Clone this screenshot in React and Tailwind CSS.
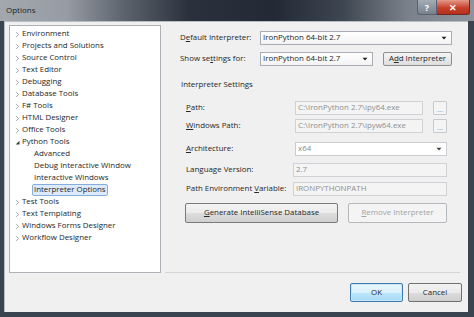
import React from 'react';

// Small glyphs used in the tree and the combo boxes
const Chevron = () => (
  <svg width="5" height="7" viewBox="0 0 5 7" className="shrink-0">
    <path d="M1.2 1.2 L3.6 3.5 L1.2 5.8" fill="none" stroke="#9a9a9a" strokeWidth="0.9" />
  </svg>
);

const Expanded = () => (
  <svg width="5" height="7" viewBox="0 0 5 7" className="shrink-0">
    <polygon points="4.5,1.8 4.5,5.6 0.7,5.6" fill="#3a3a3a" />
  </svg>
);

const DropArrow = ({ color = '#222' }) => (
  <svg width="6" height="4" viewBox="0 0 6 4" className="shrink-0">
    <polygon points="0.5,0.8 5.5,0.8 3,3.4" fill={color} />
  </svg>
);

const treeItems = [
  { label: 'Environment' },
  { label: 'Projects and Solutions' },
  { label: 'Source Control' },
  { label: 'Text Editor' },
  { label: 'Debugging' },
  { label: 'Database Tools' },
  { label: 'F# Tools' },
  { label: 'HTML Designer' },
  { label: 'Office Tools' },
  { label: 'Python Tools', open: true },
  { label: 'Advanced', child: true },
  { label: 'Debug Interactive Window', child: true },
  { label: 'Interactive Windows', child: true },
  { label: 'Interpreter Options', child: true, selected: true },
  { label: 'Test Tools' },
  { label: 'Text Templating' },
  { label: 'Windows Forms Designer' },
  { label: 'Workflow Designer' },
];

const TreeRow = ({ item }) => {
  if (item.child) {
    return (
      <div className="h-[12px] flex items-center pl-[22px]">
        <span
          className={
            item.selected
              ? 'h-[12px] flex items-center px-[1px] border border-[#84acdd] bg-[#dceafb] rounded-[2px]'
              : 'px-[2px]'
          }
        >
          {item.label}
        </span>
      </div>
    );
  }
  return (
    <div className="h-[12px] flex items-center pl-[5px] gap-[2px]">
      {item.open ? <Expanded /> : <Chevron />}
      <span>{item.label}</span>
    </div>
  );
};

const Combo = ({ text, className = '', disabled = false }) => (
  <div
    className={`h-[14px] flex items-center justify-between border pl-[2px] pr-[4px] ${
      disabled ? 'border-[#c9ccd0] bg-white text-[#8a8a8a]' : 'border-[#a9acb2] bg-[linear-gradient(#ffffff,#f3f3f3)] text-[#262626]'
    } ${className}`}
  >
    <span>{text}</span>
    <DropArrow color={disabled ? '#444' : '#222'} />
  </div>
);

const Field = ({ text, className = '' }) => (
  <div className={`h-[14px] flex items-center border border-[#cfd1d4] bg-[#f4f4f4] px-[2px] text-[#8f8f8f] ${className}`}>
    {text}
  </div>
);

const Browse = () => (
  <div className="w-[14px] h-[14px] flex items-end justify-center border border-[#c7c9cc] bg-[#f4f4f4] text-[#9a9a9a] leading-[9px] rounded-[1px]">
    ...
  </div>
);

const Label = ({ children, className = '' }) => (
  <div className={`shrink-0 text-[#262626] ${className}`}>{children}</div>
);

export default function App() {
  return (
    <div className="w-[474px] h-[317px] flex flex-col bg-[#3a4350] font-['Open_Sans','Noto_Sans',sans-serif] text-[7.9px] leading-none overflow-hidden">
      {/* Title bar */}
      <div className="h-[21px] shrink-0 flex items-start bg-[linear-gradient(to_right,#a3a8af_0%,#979ca4_14%,#5d646e_26%,#2a313c_40%,#232a35_58%,#3d4550_72%,#7b818a_86%,#8e949c_100%)]">
        <div className="pl-[6px] pt-[6px] text-[8px] text-[#1c1f24]">Options</div>
        <div className="ml-auto mr-[4px] flex">
          <div className="w-[20px] h-[15px] flex items-center justify-center border border-[#59616c] border-t-0 rounded-bl-[3px] bg-[linear-gradient(#a4abb5,#78818d)] text-white text-[9px] font-bold">
            ?
          </div>
          <div className="w-[33px] h-[15px] flex items-center justify-center border border-[#6e2a22] border-t-0 border-l-0 rounded-br-[3px] bg-[linear-gradient(#e49a8c,#c8402c_55%,#b5301d)] text-white text-[9px] font-bold">
            ✕
          </div>
        </div>
      </div>

      {/* Client area */}
      <div className="flex-1 ml-[4px] mr-[6px] mb-[5px] flex flex-col border-l border-t border-[#b9bec5] bg-[#f0f0f0]">
        <div className="flex pt-[3px] pl-[4px]">
          {/* Tree */}
          <div className="w-[152px] h-[248px] shrink-0 border border-[#aeb2b7] bg-white pt-[2px] text-[#262626]">
            {treeItems.map((item) => (
              <TreeRow key={item.label} item={item} />
            ))}
          </div>

          {/* Settings */}
          <div className="w-[295px] h-[248px] ml-[4px] border-b border-[#d5d5d5] pl-[15px]">
            <div className="mt-[6px] flex items-center">
              <Label className="w-[80px]">
                D<span className="underline">e</span>fault Interpreter:
              </Label>
              <Combo text="IronPython 64-bit 2.7" className="w-[192px]" />
            </div>
            <div className="mt-[7px] flex items-center">
              <Label className="w-[80px]">
                Show se<span className="underline">t</span>tings for:
              </Label>
              <Combo text="IronPython 64-bit 2.7" className="w-[113px]" />
              <div className="ml-[10px] w-[69px] h-[14px] flex items-center justify-center border border-[#8e8f8f] rounded-[2px] bg-[linear-gradient(#f4f4f4,#dedede)] text-[#262626]">
                A<span className="underline">d</span>d Interpreter
              </div>
            </div>

            <div className="mt-[13px] pl-[1px] h-[11px] flex items-center text-[#262626]">Interpreter Settings</div>

            <div className="pl-[6px]">
              <div className="mt-[11px] flex items-center">
                <Label className="w-[109px]">
                  <span className="underline">P</span>ath:
                </Label>
                <Field text="C:\IronPython 2.7\ipy64.exe" className="w-[128px]" />
                <div className="ml-[10px]">
                  <Browse />
                </div>
              </div>
              <div className="mt-[4px] flex items-center">
                <Label className="w-[109px]">
                  <span className="underline">W</span>indows Path:
                </Label>
                <Field text="C:\IronPython 2.7\ipyw64.exe" className="w-[128px]" />
                <div className="ml-[10px]">
                  <Browse />
                </div>
              </div>
              <div className="mt-[9px] flex items-center">
                <Label className="w-[109px]">
                  <span className="underline">A</span>rchitecture:
                </Label>
                <Combo text="x64" disabled className="w-[152px]" />
              </div>
              <div className="mt-[7px] flex items-center">
                <Label className="w-[107px]">
                  Lan<span className="underline">g</span>uage Version:
                </Label>
                <Field text="2.7" className="w-[154px]" />
              </div>
              <div className="mt-[5px] flex items-center">
                <Label className="w-[107px]">
                  Path Environment <span className="underline">V</span>ariable:
                </Label>
                <Field text="IRONPYTHONPATH" className="w-[154px]" />
              </div>
              <div className="mt-[7px] flex items-center">
                <div className="-ml-[1px] w-[153px] h-[20px] flex items-center justify-center border border-[#777a7d] rounded-[2px] bg-[linear-gradient(#f3f3f3_0%,#ebebeb_50%,#dddddd_51%,#cfcfcf_100%)] text-[#262626]">
                  <span className="underline">G</span>enerate IntelliSense Database
                </div>
                <div className="ml-[10px] w-[99px] h-[20px] flex items-center justify-center border border-[#b4b8bc] rounded-[2px] bg-[#f4f4f4] text-[#a3a3a3]">
                  <span className="underline">R</span>emove Interpreter
                </div>
              </div>
            </div>
          </div>
        </div>

        {/* Dialog buttons */}
        <div className="flex justify-end pr-[6px] pt-[10px]">
          <div className="w-[53px] h-[19px] flex items-center justify-center border border-[#3d7bad] rounded-[2px] bg-[linear-gradient(#eaf6fd_0%,#d9f0fc_50%,#bee6fd_51%,#a7d9f5_100%)] text-[#262626] shadow-[inset_0_0_0_1px_#c8e6f8]">
            OK
          </div>
          <div className="ml-[5px] w-[54px] h-[19px] flex items-center justify-center border border-[#707070] rounded-[2px] bg-[linear-gradient(#f2f2f2_0%,#ebebeb_50%,#dddddd_51%,#cfcfcf_100%)] text-[#262626]">
            Cancel
          </div>
        </div>
      </div>
    </div>
  );
}
